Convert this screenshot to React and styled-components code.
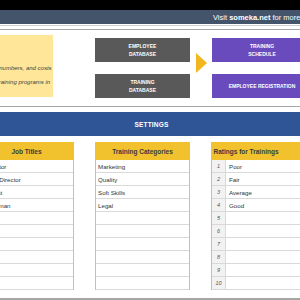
import React from 'react';
import styled, { createGlobalStyle } from 'styled-components';

const GlobalStyle = createGlobalStyle`
  html, body {
    margin: 0;
    width: 300px;
    height: 300px;
    overflow: hidden;
    background: #fff;
    font-family: "Liberation Sans", Arial, sans-serif;
  }
  * { box-sizing: border-box; }
`;

const Sheet = styled.div`
  width: 420px;
  margin-left: -60px;
  display: flex;
  flex-direction: column;
`;

const TopStrip = styled.div`
  height: 10px;
  background: #000;
`;

const Banner = styled.div`
  height: 14px;
  background: #44546a;
  color: #fff;
  display: flex;
  align-items: center;
  padding-left: 273px;
  font-size: 7.5px;
  white-space: nowrap;
  b { font-weight: 700; }
`;

const Divider = styled.div`
  height: 4px;
  margin-top: 1px;
  border-top: 1px solid #cfcfcf;
`;

const TopSection = styled.div`
  height: 78px;
  border-top: 1px solid #a6a6a6;
  border-bottom: 1px solid #a6a6a6;
  display: flex;
  align-items: flex-start;
`;

const Info = styled.div`
  width: 113px;
  height: 62px;
  margin-top: 5px;
  background: #ffe699;
  padding: 26px 0 0 6px;
  font-size: 6px;
  font-style: italic;
  line-height: 14px;
  color: #404040;
  white-space: nowrap;
  overflow: hidden;
`;

const Stack = styled.div`
  width: ${p => p.$width}px;
  margin-left: ${p => p.$offset}px;
  margin-top: 8px;
  display: flex;
  flex-direction: column;
  gap: 12px;
`;

const Tile = styled.div`
  height: 24px;
  background: ${p => (p.$tone === 'purple' ? '#6a4bbd' : '#595959')};
  color: #fff;
  display: flex;
  align-items: center;
  justify-content: center;
  text-align: center;
  font-size: 5px;
  font-weight: 700;
  line-height: 8px;
  white-space: nowrap;
`;

const Arrow = styled.div`
  width: 11px;
  height: 20px;
  margin: 23px 5px 0 6px;
  background: #f2b71f;
  clip-path: polygon(0 0, 100% 50%, 0 100%);
`;

const SettingsBar = styled.div`
  margin: 5px 0 0 39px;
  width: 345px;
  height: 24px;
  background: #2f5597;
  color: #fff;
  display: flex;
  align-items: center;
  justify-content: center;
  font-size: 6.5px;
  font-weight: 700;
  letter-spacing: 0.2px;
`;

const TablesRow = styled.div`
  margin-top: 6px;
  padding-left: 39px;
  display: flex;
  gap: 21px;
  align-items: flex-start;
`;

const Table = styled.div`
  width: ${p => p.$width}px;
  border-left: 1px solid #bfbfbf;
  border-right: 1px solid #bfbfbf;
  flex-shrink: 0;
`;

const Head = styled.div`
  height: 18px;
  background: #f2c12e;
  color: #3b3b3b;
  font-size: 6.5px;
  font-weight: 700;
  display: flex;
  align-items: center;
  justify-content: center;
  padding-right: ${p => p.$shift || 0}px;
`;

const Row = styled.div`
  height: 13px;
  border-bottom: 1px solid #d9d9d9;
  display: flex;
  align-items: center;
  font-size: 6.2px;
  color: #333;
  white-space: nowrap;
`;

const Cell = styled.div`
  padding-left: ${p => p.$pad || 2}px;
  flex: 1;
`;

const Num = styled.div`
  width: 14px;
  height: 100%;
  background: #f2f2f2;
  border-right: 1px solid #d9d9d9;
  display: flex;
  align-items: center;
  justify-content: center;
  font-size: 5.5px;
  font-style: italic;
  color: #555;
`;

const BottomBar = styled.div`
  margin-top: 8px;
  height: 6px;
  background: #a6a6a6;
`;

const jobs = ['Operator', 'Sales Director', 'Analyst', 'Craftsman'];
const categories = ['Marketing', 'Quality', 'Soft Skills', 'Legal'];
const ratings = ['Poor', 'Fair', 'Average', 'Good'];
const rows = Array.from({ length: 10 }, (_, i) => i);

export default function App() {
  return (
    <>
      <GlobalStyle />
      <Sheet>
        <TopStrip />
        <Banner>
          Visit&nbsp;<b>someka.net</b>&nbsp;for more templates
        </Banner>
        <Divider />
        <TopSection>
          <Info>
            <div>Track hours, trainer numbers, and costs</div>
            <div>Plan and schedule training programs in</div>
          </Info>
          <Stack $width={95} $offset={42}>
            <Tile>EMPLOYEE<br />DATABASE</Tile>
            <Tile>TRAINING<br />DATABASE</Tile>
          </Stack>
          <Arrow />
          <Stack $width={100} $offset={0}>
            <Tile $tone="purple">TRAINING<br />SCHEDULE</Tile>
            <Tile $tone="purple">EMPLOYEE REGISTRATION</Tile>
          </Stack>
        </TopSection>
        <SettingsBar>SETTINGS</SettingsBar>
        <TablesRow>
          <Table $width={95}>
            <Head>Job Titles</Head>
            {rows.map(i => (
              <Row key={i}><Cell>{jobs[i] || ''}</Cell></Row>
            ))}
          </Table>
          <Table $width={95}>
            <Head>Training Categories</Head>
            {rows.map(i => (
              <Row key={i}><Cell>{categories[i] || ''}</Cell></Row>
            ))}
          </Table>
          <Table $width={100}>
            <Head $shift={30}>Ratings for Trainings</Head>
            {rows.map(i => (
              <Row key={i}>
                <Num>{i + 1}</Num>
                <Cell $pad={3}>{ratings[i] || ''}</Cell>
              </Row>
            ))}
          </Table>
        </TablesRow>
        <BottomBar />
      </Sheet>
    </>
  );
}
